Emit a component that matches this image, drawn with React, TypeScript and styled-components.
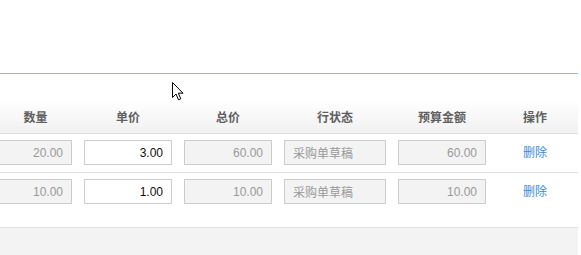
import React from "react";
import styled, { createGlobalStyle } from "styled-components";

const Global = createGlobalStyle`
  html, body { margin: 0; padding: 0; background: #fff; }
  body { font-family: "Liberation Sans", "Noto Sans CJK SC", sans-serif; font-size: 12px; }
`;

const Page = styled.div`
  position: relative;
  width: 581px;
  height: 255px;
  overflow: hidden;
  background: #fff;
`;

const Frame = styled.div`
  width: 578px;
  display: flex;
  flex-direction: column;
`;

const TopArea = styled.div`
  height: 73px;
`;

const Divider = styled.div`
  height: 1px;
  background-color: rgb(120, 196, 240);
`;

const Gap = styled.div`
  height: 26px;
`;

const TableClip = styled.div`
  overflow: hidden;
  width: 578px;
`;

const Grid = styled.div`
  margin-left: -7px;
  display: grid;
  grid-template-columns: 85px 100px 100px 114px 100px 86px;
`;

const HeadRow = styled.div`
  display: contents;
`;

const HeadCell = styled.div`
  height: 33px;
  border-bottom: 1px solid #dddddd;
  background: linear-gradient(#ffffff, #f1f1f1);
  display: flex;
  align-items: center;
  justify-content: center;
  font-family: "Noto Sans CJK SC", sans-serif;
  font-weight: bold;
  font-size: 12px;
  color: #5f5f5f;
`;

const Cell = styled.div<{ $last?: boolean }>`
  box-sizing: border-box;
  height: 39px;
  padding: 6px 6px 7px;
  border-bottom: 1px solid ${(p) => (p.$last ? "transparent" : "#dddddd")};
  display: flex;
  align-items: flex-start;
  justify-content: center;
`;

const Field = styled.div<{ $disabled?: boolean; $left?: boolean }>`
  box-sizing: border-box;
  width: 100%;
  height: 25px;
  border: 1px solid #cccccc;
  background: ${(p) => (p.$disabled ? "#f3f3f3" : "#ffffff")};
  color: ${(p) => (p.$disabled ? "#999999" : "#111111")};
  display: flex;
  align-items: center;
  justify-content: ${(p) => (p.$left ? "flex-start" : "flex-end")};
  padding: 0 8px 0 8px;
  font-family: ${(p) =>
    p.$left ? '"Noto Sans CJK SC", sans-serif' : '"Liberation Sans", Arial, sans-serif'};
  font-size: 12px;
`;

const LinkText = styled.a`
  margin-top: 3px;
  color: #3a8bd8;
  font-family: "Noto Sans CJK SC", sans-serif;
  font-size: 12px;
  text-decoration: none;
  cursor: pointer;
`;

const Spacer = styled.div`
  height: 15px;
`;

const Footer = styled.div`
  height: 29px;
  border-top: 1px solid #e2e2e2;
  background: #f3f3f3;
`;

const Pointer = styled.svg`
  position: absolute;
  left: 172px;
  top: 82px;
`;

type Row = { qty: string; price: string; total: string; status: string; budget: string };

const rows: Row[] = [
  { qty: "20.00", price: "3.00", total: "60.00", status: "采购单草稿", budget: "60.00" },
  { qty: "10.00", price: "1.00", total: "10.00", status: "采购单草稿", budget: "10.00" },
];

const headers = ["数量", "单价", "总价", "行状态", "预算金额", "操作"];

export default function App() {
  return (
    <Page>
      <Global />
      <Frame>
        <TopArea />
        <Divider />
        <Gap />
        <TableClip>
          <Grid>
            <HeadRow>
              {headers.map((h) => (
                <HeadCell key={h}>{h}</HeadCell>
              ))}
            </HeadRow>
            {rows.map((r, i) => {
              const last = i === rows.length - 1;
              return (
                <React.Fragment key={i}>
                  <Cell $last={last}>
                    <Field $disabled>{r.qty}</Field>
                  </Cell>
                  <Cell $last={last}>
                    <Field>{r.price}</Field>
                  </Cell>
                  <Cell $last={last}>
                    <Field $disabled>{r.total}</Field>
                  </Cell>
                  <Cell $last={last}>
                    <Field $disabled $left>{r.status}</Field>
                  </Cell>
                  <Cell $last={last}>
                    <Field $disabled>{r.budget}</Field>
                  </Cell>
                  <Cell $last={last}>
                    <LinkText>删除</LinkText>
                  </Cell>
                </React.Fragment>
              );
            })}
          </Grid>
        </TableClip>
        <Spacer />
        <Footer />
      </Frame>
      <Pointer width="13" height="19" viewBox="0 0 13 19">
        <path
          d="M0.5 0.5 L0.5 15.5 L4 12 L6.5 17.8 L8.8 16.8 L6.3 11.2 L11 11.2 Z"
          fill="#fff"
          stroke="#000"
          strokeWidth="1"
          strokeLinejoin="miter"
        />
      </Pointer>
    </Page>
  );
}
